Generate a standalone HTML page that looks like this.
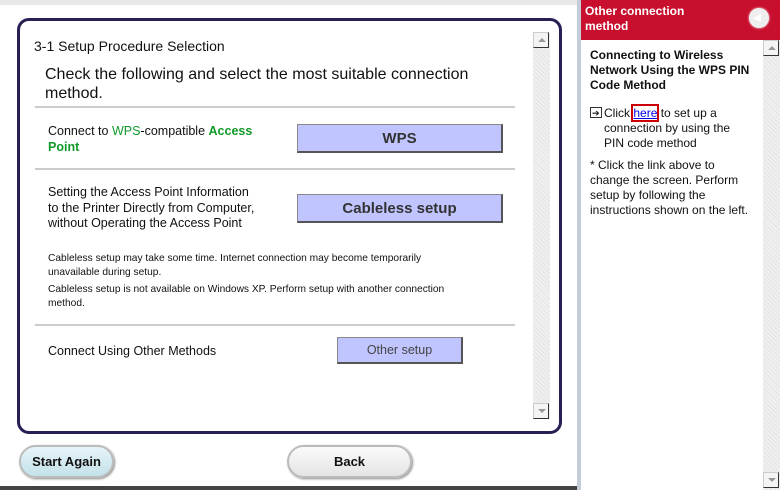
<!DOCTYPE html>
<html><head><style>
*{margin:0;padding:0;box-sizing:border-box}
body{width:780px;height:490px;overflow:hidden;background:#fff;font-family:"Liberation Sans",Arial,sans-serif;position:relative}
.abs{position:absolute}
.chk{background-color:#f0f0f0;background-image:repeating-linear-gradient(45deg,#e4e4e4 0 1px,transparent 1px 3px)}
.sbtn{position:absolute;width:16px;height:16px;background:#f4f4f4;border:1px solid #ccc;border-right-color:#333;border-bottom-color:#333}
.sbtn:after{content:"";position:absolute;left:4px;border-left:4px solid transparent;border-right:4px solid transparent}
.up:after{top:5px;border-bottom:4px solid #999}
.dn:after{top:5px;border-top:4px solid #999}
.btn{position:absolute;background:#c0c4ff;border:1px solid #888;border-right:2px solid #555;border-bottom:2px solid #555;text-align:center;color:#333}
.hr{position:absolute;left:35px;width:480px;height:2px;background:#ccc}
.g{color:#119a2a}
</style></head><body>
<div class="abs" style="left:0;top:0;width:578px;height:5px;background:#e8e8e8"></div>
<div class="abs" style="left:0;top:486px;width:580px;height:4px;background:#444"></div>
<div class="abs" style="left:577px;top:0;width:4px;height:490px;background:#c4ccd8"></div>
<div class="abs" style="left:17px;top:18px;width:545px;height:416px;border:3px solid #2a1f55;border-radius:12px"></div>
<div class="abs chk" style="left:533px;top:33px;width:17px;height:386px"></div>
<div class="sbtn up" style="left:533px;top:32px"></div>
<div class="sbtn dn" style="left:533px;top:403px"></div>
<div class="abs" style="left:34px;top:38px;font-size:14px;color:#111">3-1 Setup Procedure Selection</div>
<div class="abs" style="left:45px;top:65px;font-size:16px;line-height:19px;color:#111;width:480px">Check the following and select the most suitable connection method.</div>
<div class="hr" style="top:106px"></div>
<div class="abs" style="left:48px;top:123px;font-size:12.5px;line-height:16px;color:#111;width:230px">Connect to <b class="g" style="font-weight:normal">WPS</b>-compatible <b class="g">Access Point</b></div>
<div class="btn" style="left:297px;top:124px;width:206px;height:29px;font-size:15px;font-weight:bold;line-height:27px">WPS</div>
<div class="hr" style="top:168px"></div>
<div class="abs" style="left:48px;top:185px;font-size:12.5px;line-height:15.5px;color:#111;white-space:nowrap">Setting the Access Point Information<br>to the Printer Directly from Computer,<br>without Operating the Access Point</div>
<div class="btn" style="left:297px;top:194px;width:206px;height:29px;font-size:15px;font-weight:bold;line-height:27px">Cableless setup</div>
<div class="abs" style="left:48px;top:252px;font-size:10.2px;line-height:14px;color:#111;white-space:nowrap">Cableless setup may take some time. Internet connection may become temporarily<br>unavailable during setup.</div>
<div class="abs" style="left:48px;top:283px;font-size:10.2px;line-height:14px;color:#111;white-space:nowrap">Cableless setup is not available on Windows XP. Perform setup with another connection<br>method.</div>
<div class="hr" style="top:324px"></div>
<div class="abs" style="left:48px;top:344px;font-size:12.5px;color:#111">Connect Using Other Methods</div>
<div class="btn" style="left:337px;top:337px;width:126px;height:27px;font-size:12.5px;line-height:25px;color:#444">Other setup</div>
<div class="abs" style="left:19px;top:445px;width:95px;height:33px;border-radius:17px;border:2px solid #bbb;background:linear-gradient(#e6f4f8,#c4e2ea);box-shadow:1px 1px 2px #888;text-align:center;font-weight:bold;font-size:13px;line-height:29px;color:#111">Start Again</div>
<div class="abs" style="left:287px;top:445px;width:125px;height:33px;border-radius:17px;border:2px solid #bbb;background:linear-gradient(#fafafa,#e4e4e4);box-shadow:1px 1px 2px #888;text-align:center;font-weight:bold;font-size:13px;line-height:29px;color:#111">Back</div>
<div class="abs" style="left:581px;top:0;width:199px;height:40px;background:#c8102e;color:#fff;font-weight:bold;font-size:12px;line-height:15px;padding:4px 0 0 4px">Other connection<br>method</div>
<div class="abs" style="left:749px;top:8px;width:20px;height:20px;border-radius:50%;background:#eee;box-shadow:0 0 2px #fff"></div>
<div class="abs" style="left:753px;top:14px;border-right:8px solid #fff;border-top:4px solid transparent;border-bottom:4px solid transparent"></div>
<div class="abs chk" style="left:763px;top:40px;width:17px;height:450px"></div>
<div class="sbtn up" style="left:763px;top:40px"></div>
<div class="sbtn dn" style="left:763px;top:472px"></div>
<div class="abs" style="left:590px;top:48px;width:170px;font-size:12px;font-weight:bold;line-height:15px;color:#111">Connecting to Wireless Network Using the WPS PIN Code Method</div>
<div class="abs" style="left:590px;top:107px;width:12px;height:11px;border:1px solid #333;background:#fff"></div>
<div class="abs" style="left:592px;top:109px;font-size:9px;line-height:8px;color:#111">➔</div>
<div class="abs" style="left:604px;top:106px;width:156px;font-size:12px;line-height:15px;color:#111">Click <span style="outline:2px solid #c00;color:#00e;text-decoration:underline">here</span> to set up a<br>connection by using the<br>PIN code method</div>
<div class="abs" style="left:590px;top:158px;width:172px;font-size:12px;line-height:15px;color:#111">* Click the link above to<br>change the screen. Perform<br>setup by following the<br>instructions shown on the left.</div>
</body></html>
